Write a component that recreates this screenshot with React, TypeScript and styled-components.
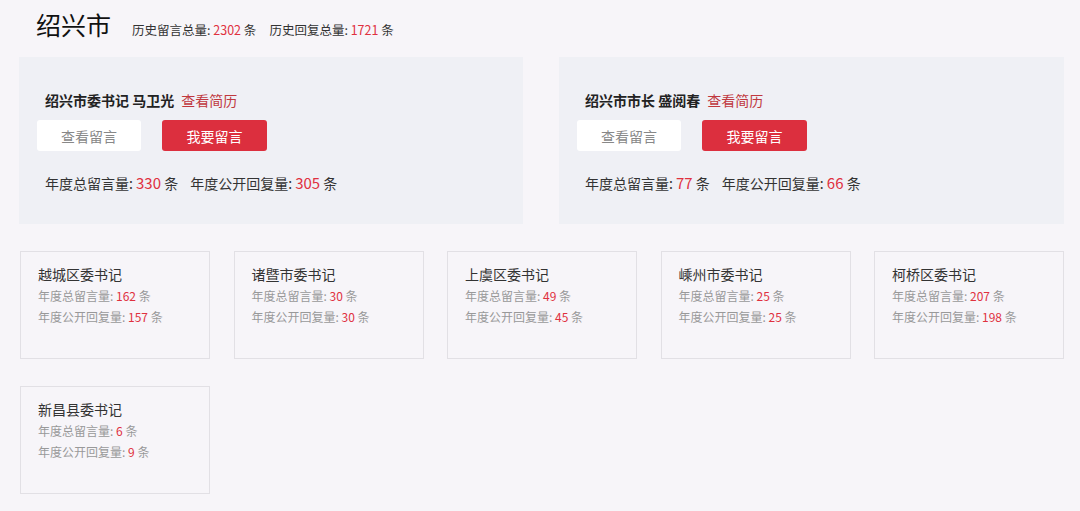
import React from "react";
import styled, { createGlobalStyle } from "styled-components";

const GlobalStyle = createGlobalStyle`
  html, body {
    margin: 0;
    padding: 0;
    background: #f7f5f9;
  }
  body {
    font-family: "Noto Sans CJK SC", "Noto Sans", "Liberation Sans", sans-serif;
    color: #333;
  }
`;

const Page = styled.div`
  width: 1080px;
  height: 511px;
  box-sizing: border-box;
  padding: 0 16px 0 19px;
  background: #f7f5f9;
  overflow: hidden;
`;

const Header = styled.div`
  display: flex;
  align-items: baseline;
  height: 57px;
  padding-left: 17px;
  box-sizing: border-box;
  padding-top: 7px;
`;

const CityName = styled.h1`
  margin: 0;
  font-size: 25px;
  font-weight: 400;
  color: #111;
  line-height: 34px;
  margin-right: 21px;
`;

const HeaderStat = styled.span`
  font-size: 12.5px;
  color: #333;
  margin-right: 13px;
  white-space: pre;
`;

const Red = styled.span<{ $size?: number }>`
  color: #e0313f;
  font-size: ${(p) => (p.$size ? `${p.$size}px` : "inherit")};
`;

const LeaderRow = styled.div`
  display: grid;
  grid-template-columns: 504px 505px;
  justify-content: space-between;
  width: 1045px;
`;

const LeaderCard = styled.div`
  background: #eff0f5;
  height: 167px;
  box-sizing: border-box;
  padding: 32px 18px 0 18px;
`;

const LeaderName = styled.div`
  display: flex;
  align-items: center;
  gap: 7px;
  padding-left: 8px;
  font-size: 14px;
  line-height: 22px;
`;

const Bold = styled.span`
  font-weight: 700;
  color: #222;
`;

const LinkText = styled.span`
  color: #c0383e;
`;

const Buttons = styled.div`
  display: flex;
  gap: 21px;
  margin-top: 9px;
`;

const Button = styled.button<{ $primary?: boolean }>`
  width: ${(p) => (p.$primary ? "105px" : "104px")};
  height: 31px;
  border: none;
  border-radius: 3px;
  font-family: inherit;
  font-size: 14px;
  background: ${(p) => (p.$primary ? "#dc2f3e" : "#ffffff")};
  color: ${(p) => (p.$primary ? "#ffffff" : "#888888")};
  padding: 0;
  cursor: pointer;
`;

const LeaderStats = styled.div`
  display: flex;
  gap: 12px;
  padding-left: 8px;
  margin-top: 21px;
  font-size: 14px;
  line-height: 22px;
  color: #333;
  white-space: pre;
`;

const Grid = styled.div`
  display: grid;
  grid-template-columns: repeat(5, 190px);
  justify-content: space-between;
  row-gap: 27px;
  width: 1045px;
  margin-top: 27px;
  padding-left: 1px;
  box-sizing: border-box;
`;

const SmallCard = styled.div`
  height: 108px;
  box-sizing: border-box;
  border: 1px solid #e2e0e5;
  padding: 11px 17px 0 17px;
`;

const SmallTitle = styled.div`
  font-size: 14px;
  line-height: 22px;
  color: #333;
`;

const SmallStat = styled.div`
  font-size: 12px;
  line-height: 21px;
  color: #999;
  white-space: pre;
`;

const leaders = [
  { title: "绍兴市委书记 马卫光", total: 330, reply: 305 },
  { title: "绍兴市市长 盛阅春", total: 77, reply: 66 },
];

const districts = [
  { name: "越城区委书记", total: 162, reply: 157 },
  { name: "诸暨市委书记", total: 30, reply: 30 },
  { name: "上虞区委书记", total: 49, reply: 45 },
  { name: "嵊州市委书记", total: 25, reply: 25 },
  { name: "柯桥区委书记", total: 207, reply: 198 },
  { name: "新昌县委书记", total: 6, reply: 9 },
];

export default function App() {
  return (
    <>
      <GlobalStyle />
      <Page>
        <Header>
          <CityName>绍兴市</CityName>
          <HeaderStat>
            {"历史留言总量: "}<Red>2302</Red>{" 条"}
          </HeaderStat>
          <HeaderStat>
            {"历史回复总量: "}<Red>1721</Red>{" 条"}
          </HeaderStat>
        </Header>
        <LeaderRow>
          {leaders.map((l) => (
            <LeaderCard key={l.title}>
              <LeaderName>
                <Bold>{l.title}</Bold>
                <LinkText>查看简历</LinkText>
              </LeaderName>
              <Buttons>
                <Button>查看留言</Button>
                <Button $primary>我要留言</Button>
              </Buttons>
              <LeaderStats>
                <span>
                  {"年度总留言量: "}<Red $size={15}>{l.total}</Red>{" 条"}
                </span>
                <span>
                  {"年度公开回复量: "}<Red $size={15}>{l.reply}</Red>{" 条"}
                </span>
              </LeaderStats>
            </LeaderCard>
          ))}
        </LeaderRow>
        <Grid>
          {districts.map((d) => (
            <SmallCard key={d.name}>
              <SmallTitle>{d.name}</SmallTitle>
              <SmallStat>
                {"年度总留言量: "}<Red>{d.total}</Red>{" 条"}
              </SmallStat>
              <SmallStat>
                {"年度公开回复量: "}<Red>{d.reply}</Red>{" 条"}
              </SmallStat>
            </SmallCard>
          ))}
        </Grid>
      </Page>
    </>
  );
}
